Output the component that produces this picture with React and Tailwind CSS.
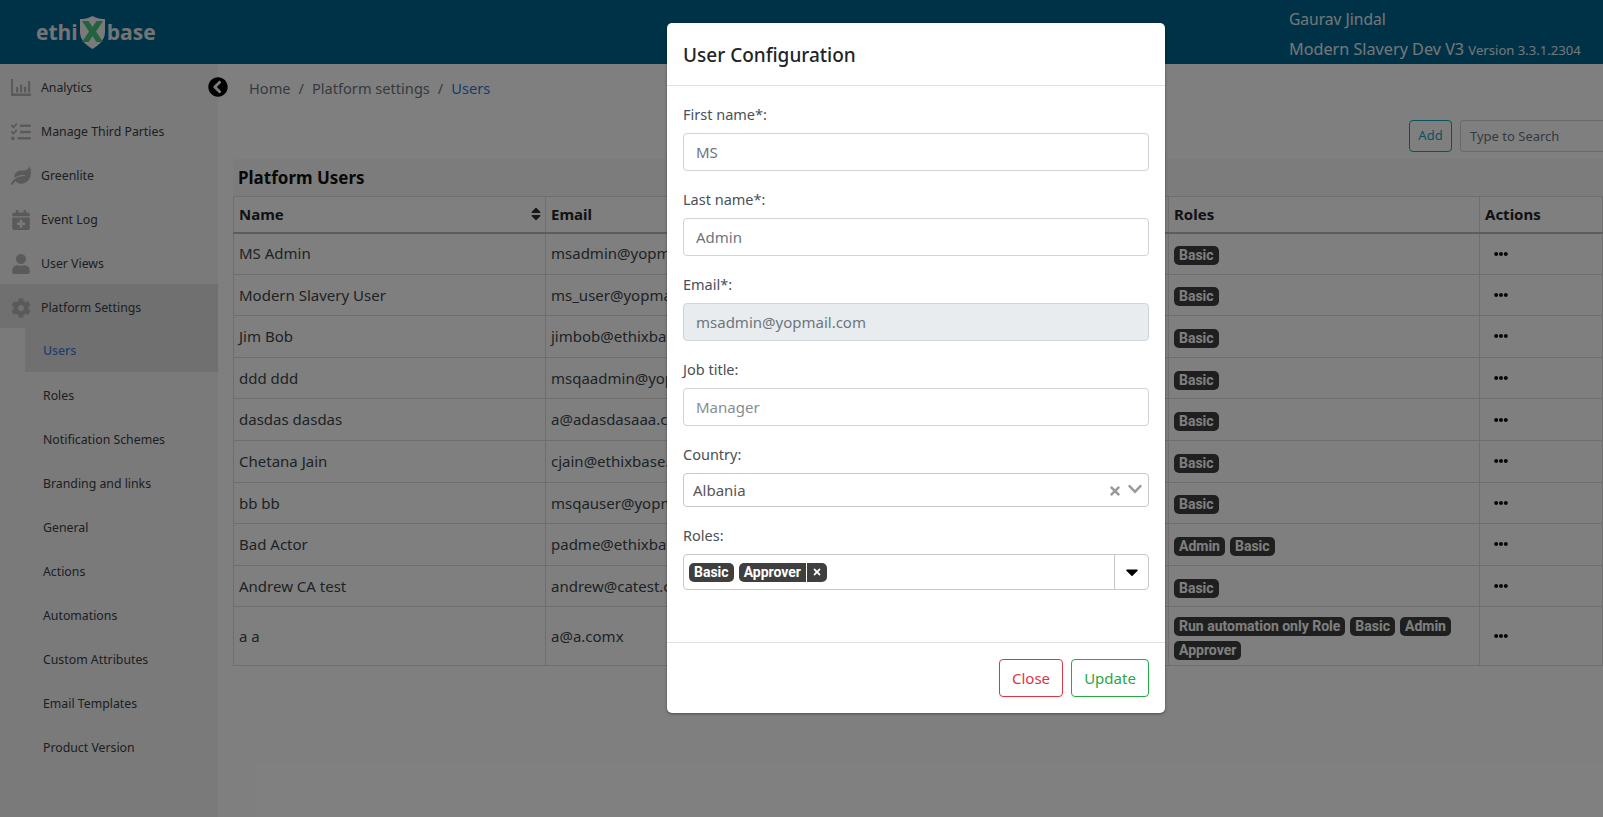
import React from "react";
import {
  FaLeaf,
  FaCalendarPlus,
  FaUser,
  FaCog,
  FaChevronCircleLeft,
  FaEllipsisH,
  FaSortUp,
  FaSortDown,
  FaChevronDown,
  FaTimes,
  FaCaretDown,
} from "react-icons/fa";
import { FaListCheck } from "react-icons/fa6";

// axis with thin bars, the package's chart icons are boxed or too heavy
const ChartIcon = ({ className }) => (
  <svg width="20" height="20" viewBox="0 0 20 20" className={className} fill="currentColor">
    <path d="M0 1h2v14.6h18V18H1a1 1 0 0 1-1-1z" />
    <rect x="5" y="9" width="2.2" height="5.5" />
    <rect x="9" y="6.5" width="2.2" height="8" />
    <rect x="13" y="8.5" width="2.2" height="6" />
    <rect x="17" y="3" width="2.2" height="11.5" />
  </svg>
);

const mainLinks = [
  { name: "Analytics", icon: ChartIcon },
  { name: "Manage Third Parties", icon: FaListCheck },
  { name: "Greenlite", icon: FaLeaf },
  { name: "Event Log", icon: FaCalendarPlus },
  { name: "User Views", icon: FaUser },
  { name: "Platform Settings", icon: FaCog, active: true },
];

const subLinks = [
  "Users",
  "Roles",
  "Notification Schemes",
  "Branding and links",
  "General",
  "Actions",
  "Automations",
  "Custom Attributes",
  "Email Templates",
  "Product Version",
];

const users = [
  { name: "MS Admin", email: "msadmin@yopmail.com", roles: ["Basic"] },
  { name: "Modern Slavery User", email: "ms_user@yopmail.com", roles: ["Basic"] },
  { name: "Jim Bob", email: "jimbob@ethixbase.com", roles: ["Basic"] },
  { name: "ddd ddd", email: "msqaadmin@yopmail.com", roles: ["Basic"] },
  { name: "dasdas dasdas", email: "a@adasdasaaa.com", roles: ["Basic"] },
  { name: "Chetana Jain", email: "cjain@ethixbase.com", roles: ["Basic"] },
  { name: "bb bb", email: "msqauser@yopmail.com", roles: ["Basic"] },
  { name: "Bad Actor", email: "padme@ethixbase.com", roles: ["Admin", "Basic"] },
  { name: "Andrew CA test", email: "andrew@catest.com", roles: ["Basic"] },
  { name: "a a", email: "a@a.comx", roles: ["Run automation only Role", "Basic", "Admin", "Approver"], tall: true },
];

const Badge = ({ children }) => (
  <span className="inline-block h-[19px] rounded-[5px] bg-[#3f3f3f] px-[5px] mr-[5px] text-[14px] leading-[19px] font-bold text-white font-['Roboto',sans-serif] align-middle">
    {children}
  </span>
);

const Field = ({ label, value, placeholder, disabled }) => (
  <div className="mb-4">
    <div className="h-6 mb-[7px] text-[14.5px] leading-6 text-[#495057]">{label}</div>
    <div
      className={`h-[38px] rounded-[4px] border border-[#ced4da] px-3 text-[15px] leading-[37px] ${
        disabled ? "bg-[#e9ecef] text-[#6c757d]" : "bg-white text-[#6c757d]"
      } ${placeholder ? "text-[#868e96]" : ""}`}
    >
      {value || placeholder}
    </div>
  </div>
);

const Logo = () => (
  <div className="flex items-center text-[#e9e9e9] font-['Open_Sans',sans-serif] font-bold text-[21px] leading-none">
    <span>ethi</span>
    <svg width="27" height="33" viewBox="0 0 27 33" className="mx-[1px]">
      <path d="M13.5 0 C18 2.5 22 3 26 3 L26 16 C26 24 20 29 13.5 33 C7 29 1 24 1 16 L1 3 C5 3 9 2.5 13.5 0 Z" fill="#f4f4f4" />
      <path d="M3 5 L9.5 5 L13.5 11 L17.5 5 L24 5 L17 15.5 L24 26 L17.5 26 L13.5 20 L9.5 26 L3 26 L10 15.5 Z" fill="#43c47f" />
    </svg>
    <span>base</span>
  </div>
);

export default function App() {
  return (
    <div className="relative h-[817px] w-full overflow-hidden bg-white font-['Noto_Sans',sans-serif]">
      {/* Top bar */}
      <header className="flex h-16 items-center justify-between bg-[#00658f] pl-9">
        <Logo />
        <div className="w-[314px] text-[#e6edf0]">
          <div className="h-[32px] pt-[7px] text-[15.6px] leading-6">Gaurav Jindal</div>
          <div className="h-[32px] pt-[5px] whitespace-nowrap text-[16.2px] leading-6">
            Modern Slavery Dev V3 <span className="text-[13.1px]">Version 3.3.1.2304</span>
          </div>
        </div>
      </header>

      <div className="flex h-[753px]">
        {/* Sidebar */}
        <aside className="relative w-[218px] shrink-0 bg-[#f4f4f4] text-[12.3px] text-[#3a3f44]">
          {mainLinks.map((item) => (
            <div key={item.name} className={`flex h-11 items-center pt-[4px] ${item.active ? "bg-[#e0e0e0]" : ""}`}>
              <div className="flex w-[41px] justify-center px-[1px]">
                <item.icon size={20} className="text-[#b5b5b5]" />
              </div>
              <span>{item.name}</span>
            </div>
          ))}
          <div className="pl-[25px]">
            {subLinks.map((item, i) => (
              <div
                key={item}
                className={`flex h-11 items-center pl-[18px] ${i === 0 ? "pt-[2px] bg-[#e0e0e0] font-medium text-[#3b7de0]" : "pt-[4px]"}`}
              >
                {item}
              </div>
            ))}
          </div>
          <FaChevronCircleLeft size={20} className="absolute right-[-10px] top-[13px] text-black" />
        </aside>

        {/* Main content */}
        <main className="min-w-0 flex-1 overflow-hidden pl-[15px]">
          <div className="flex h-[47px] items-center pl-[16px] pt-[3px] text-[14.6px] text-[#6c757d]">
            <span>Home</span>
            <span className="mx-2">/</span>
            <span>Platform settings</span>
            <span className="mx-2">/</span>
            <span className="text-[#2f74d8]">Users</span>
          </div>
          <div className="flex h-[48px] items-start justify-end pt-[9px]">
            <button className="mr-2 h-[32px] w-[43px] rounded-[4px] border border-[#17a2b8] text-[13px] text-[#17a2b8]">
              Add
            </button>
            <div className="h-[32px] w-[143px] rounded-l-[4px] border border-r-0 border-[#ced4da] pl-[9px] text-[13px] leading-[30px] text-[#6c757d]">
              Type to Search
            </div>
          </div>

          <div className="h-[37px] bg-[#f8f9fa] pl-[5px] text-[17px] leading-[38px] font-bold text-[#111]">
            Platform Users
          </div>
          <table className="w-[1370px] table-fixed border-collapse text-[15px] text-[#40464b]">
            <colgroup>
              <col className="w-[312px]" />
              <col className="w-[623px]" />
              <col className="w-[311px]" />
              <col />
            </colgroup>
            <thead>
              <tr className="h-9 border-b-2 border-[#bbb] text-left text-[#212529]">
                <th className="relative border border-b-2 border-[#ddd] border-b-[#bbb] pl-[5px] font-bold">
                  Name
                  <span className="absolute right-[1px] top-[9px] flex flex-col text-[#333]">
                    <FaSortUp size={16} className="-mb-[16px]" />
                    <FaSortDown size={16} />
                  </span>
                </th>
                <th className="border border-b-2 border-[#ddd] border-b-[#bbb] pl-[5px] font-bold">Email</th>
                <th className="border border-b-2 border-[#ddd] border-b-[#bbb] pl-[5px] font-bold">Roles</th>
                <th className="border border-b-2 border-[#ddd] border-b-[#bbb] pl-[5px] font-bold">Actions</th>
              </tr>
            </thead>
            <tbody>
              {users.map((user) => (
                <tr key={user.name} className={user.tall ? "h-[59px]" : "h-[41.6px]"}>
                  <td className="border border-[#ddd] pl-[5px]">{user.name}</td>
                  <td className="border border-[#ddd] pl-[5px]">{user.email}</td>
                  <td className="border border-[#ddd] pl-[5px] leading-[24px]">
                    {user.roles.map((role) => (
                      <Badge key={role}>{role}</Badge>
                    ))}
                  </td>
                  <td className="border border-[#ddd] pl-[14px]">
                    <FaEllipsisH size={14} className="text-[#111]" />
                  </td>
                </tr>
              ))}
            </tbody>
          </table>
        </main>
      </div>

      {/* Backdrop */}
      <div className="absolute inset-0 bg-black/50" />

      {/* Modal */}
      <div className="absolute left-[667px] top-[23px] flex h-[690px] w-[498px] flex-col rounded-[5px] bg-white shadow-[0_1px_3px_rgba(0,0,0,0.4)]">
        <div className="flex h-[63px] shrink-0 items-center border-b border-[#dee2e6] px-4 pt-[3px] text-[19px] font-medium text-[#212529]">
          User Configuration
        </div>
        <div className="flex-1 px-4 pt-4">
          <Field label="First name*:" value="MS" />
          <Field label="Last name*:" value="Admin" />
          <Field label="Email*:" value="msadmin@yopmail.com" disabled />
          <Field label="Job title:" placeholder="Manager" />

          <div className="mb-4">
            <div className="h-6 mb-[7px] text-[14.5px] leading-6 text-[#495057]">Country:</div>
            <div className="flex h-[34px] items-center rounded-[4px] border border-[#c8c8c8] pl-[9px] pr-[5px] text-[15px] text-[#555]">
              <span className="flex-1">Albania</span>
              <FaTimes size={14} className="mt-[2px] mr-[5px] text-[#999]" />
              <FaChevronDown size={16} className="-mt-[2px] text-[#999]" />
            </div>
          </div>

          <div>
            <div className="h-6 mb-[7px] text-[14.5px] leading-6 text-[#495057]">Roles:</div>
            <div className="flex h-9 items-stretch rounded-[4px] border border-[#c8c8c8]">
              <div className="flex flex-1 items-center pl-[5px]">
                <Badge>Basic</Badge>
                <span className="flex h-[19px] items-center rounded-[5px] bg-[#3f3f3f] text-[14px] font-bold text-white font-['Roboto',sans-serif]">
                  <span className="border-r border-white pl-[5px] pr-[5px] leading-[19px]">Approver</span>
                  <FaTimes size={10} className="mx-[5px]" />
                </span>
              </div>
              <div className="flex w-[34px] items-center justify-center border-l border-[#c8c8c8]">
                <FaCaretDown size={20} className="text-black" />
              </div>
            </div>
          </div>
        </div>
        <div className="flex h-[71px] shrink-0 items-start justify-end gap-2 border-t border-[#dee2e6] px-4 pt-4">
          <button className="h-[38px] w-16 rounded-[4px] border border-[#dc3545] text-[15px] text-[#dc3545]">
            Close
          </button>
          <button className="h-[38px] w-[78px] rounded-[4px] border border-[#28a745] text-[15px] text-[#28a745]">
            Update
          </button>
        </div>
      </div>
    </div>
  );
}
